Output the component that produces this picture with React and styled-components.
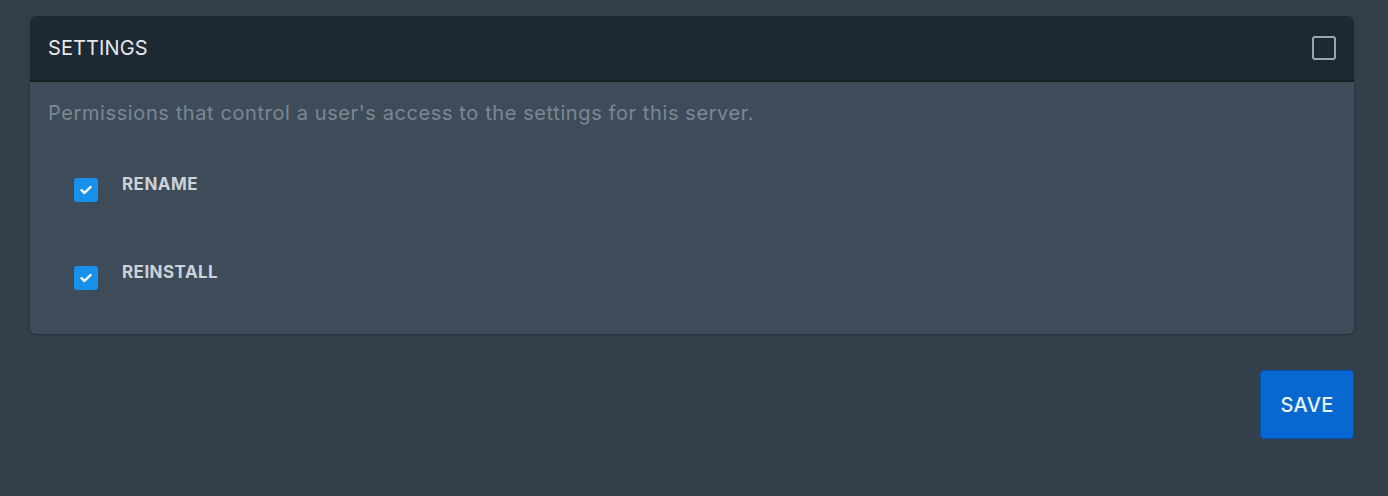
import React, { useState } from "react";
import styled, { createGlobalStyle } from "styled-components";

const Global = createGlobalStyle`
  html, body { margin: 0; padding: 0; background: #333f4b; }
  body { font-family: Inter, "Noto Sans", sans-serif; -webkit-font-smoothing: antialiased; }
`;

const Page = styled.div`
  padding: 16px 34px 0 30px;
  min-height: 496px;
  box-sizing: border-box;
  display: flex;
  flex-direction: column;
`;

const Card = styled.section`
  background: #3e4c59;
  border-radius: 6px;
  overflow: hidden;
  box-shadow: 0 1px 3px rgba(0, 0, 0, 0.25);
`;

const Header = styled.header`
  height: 66px;
  box-sizing: border-box;
  background: #1f2933;
  border-bottom: 2px solid #171f26;
  display: flex;
  align-items: center;
  justify-content: space-between;
  padding: 0 18px;
`;

const Title = styled.h2`
  margin: 0;
  font-size: 20px;
  font-weight: 400;
  color: #e4e7eb;
  letter-spacing: 0.1px;
`;

const Box = styled.span`
  width: 24px;
  height: 24px;
  box-sizing: border-box;
  border-radius: 3px;
  display: inline-flex;
  align-items: center;
  justify-content: center;
  flex: none;
  cursor: pointer;
  background: ${(p) => (p.$checked ? "#1790ea" : "transparent")};
  border: ${(p) => (p.$checked ? "none" : "2px solid #9aa5b1")};
`;

const Body = styled.div`
  padding: 19px 18px 20px;
  display: flex;
  flex-direction: column;
`;

const Description = styled.p`
  margin: 0 0 53px;
  font-size: 20px;
  letter-spacing: 0.6px;
  color: #7b8794;
  line-height: 24px;
`;

const List = styled.div`
  display: flex;
  flex-direction: column;
  gap: 40px;
  padding-left: 26px;
`;

const Row = styled.label`
  display: flex;
  align-items: flex-start;
  gap: 24px;
  height: 48px;
`;

const RowLabel = styled.span`
  font-size: 17px;
  font-weight: 700;
  color: #cbd2d9;
  letter-spacing: 0.45px;
  line-height: 20px;
  margin-top: -4px;
`;

const Footer = styled.div`
  display: flex;
  justify-content: flex-end;
  margin-top: 36px;
`;

const SaveButton = styled.button`
  width: 94px;
  height: 69px;
  box-sizing: border-box;
  background: #0967d2;
  border: 1px solid #0552b5;
  border-radius: 4px;
  color: #e6f6ff;
  font-family: inherit;
  font-size: 20px;
  font-weight: 500;
  letter-spacing: 0.3px;
  cursor: pointer;
`;

const Check = () => (
  <svg width="12" height="10" viewBox="0 0 12 10" fill="none">
    <path d="M1.5 5.2 L4.5 8 L10.5 2" stroke="#fff" strokeWidth="2.4" strokeLinecap="round" strokeLinejoin="round" />
  </svg>
);

function Checkbox({ checked, onToggle }) {
  return (
    <Box $checked={checked} onClick={onToggle}>
      {checked && <Check />}
    </Box>
  );
}

export default function App() {
  const [perms, setPerms] = useState({ RENAME: true, REINSTALL: true });
  const [all, setAll] = useState(false);
  return (
    <>
      <Global />
      <Page>
        <Card>
          <Header>
            <Title>SETTINGS</Title>
            <Checkbox checked={all} onToggle={() => setAll(!all)} />
          </Header>
          <Body>
            <Description>Permissions that control a user's access to the settings for this server.</Description>
            <List>
              {Object.keys(perms).map((k) => (
                <Row key={k}>
                  <Checkbox checked={perms[k]} onToggle={() => setPerms({ ...perms, [k]: !perms[k] })} />
                  <RowLabel>{k}</RowLabel>
                </Row>
              ))}
            </List>
          </Body>
        </Card>
        <Footer>
          <SaveButton>SAVE</SaveButton>
        </Footer>
      </Page>
    </>
  );
}
